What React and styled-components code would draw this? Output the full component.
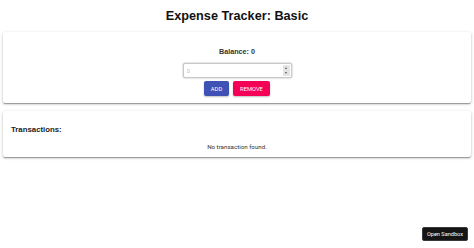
import React, { useState } from "react";
import styled, { createGlobalStyle } from "styled-components";

const GlobalStyle = createGlobalStyle`
  body {
    margin: 0;
    background: #fff;
    font-family: Roboto, "Liberation Sans", Arial, sans-serif;
    color: #222;
  }
`;

const Page = styled.div`
  padding: 0 3px 4px;
`;

const Title = styled.h1`
  margin: 0;
  height: 32px;
  display: flex;
  align-items: center;
  justify-content: center;
  font-family: "Liberation Sans", Arial, sans-serif;
  font-size: 12.7px;
  font-weight: 700;
  color: #111;
`;

const Card = styled.div`
  background: #fff;
  border-radius: 2px;
  box-shadow: 0 1px 3px 0 rgba(0, 0, 0, 0.25), 0 1px 1px 0 rgba(0, 0, 0, 0.18),
    0 2px 1px -1px rgba(0, 0, 0, 0.14);
  margin-bottom: ${props => props.gap || 0}px;
`;

const BalanceCard = styled(Card)`
  display: flex;
  flex-direction: column;
  align-items: center;
  padding: 15px 0 7px;
`;

const Balance = styled.div`
  font-family: "Liberation Sans", Arial, sans-serif;
  font-size: 7.2px;
  font-weight: 700;
  line-height: 9px;
  color: #333;
  margin-bottom: 7px;
`;

const Field = styled.div`
  box-sizing: border-box;
  width: 109px;
  height: 15px;
  display: flex;
  align-items: stretch;
  border: 1px solid #c8c8c8;
  border-radius: 2px;
  box-shadow: 0 0 2px rgba(0, 0, 0, 0.35);
  background: #fff;
  margin-bottom: 3px;
`;

const Input = styled.input`
  flex: 1;
  min-width: 0;
  border: 0;
  padding: 0 3px;
  font-family: Roboto, sans-serif;
  font-size: 6px;
  outline: 0;
  background: transparent;
  &::placeholder {
    color: #bbb;
  }
`;

const Spinner = styled.div`
  width: 7px;
  margin: 1px;
  background: #e4e4e4;
  border-radius: 1px;
  display: flex;
  flex-direction: column;
  align-items: center;
  justify-content: space-around;
`;

const Arrow = styled.span`
  width: 0;
  height: 0;
  border-left: 1.5px solid transparent;
  border-right: 1.5px solid transparent;
  ${props =>
    props.down
      ? "border-top: 2px solid #555;"
      : "border-bottom: 2px solid #555;"}
`;

const Buttons = styled.div`
  display: flex;
  gap: 4px;
`;

const Button = styled.button`
  height: 15px;
  width: ${props => props.w}px;
  padding: 0;
  border: 0;
  border-radius: 2px;
  background: ${props => props.color};
  color: #fff;
  font-family: Roboto, sans-serif;
  font-size: 5.8px;
  font-weight: 400;
  box-shadow: 0 1px 2px rgba(0, 0, 0, 0.25);
  cursor: pointer;
`;

const ListCard = styled(Card)`
  padding: 14px 8px 6px;
`;

const ListTitle = styled.div`
  font-family: "Liberation Sans", Arial, sans-serif;
  font-size: 7.8px;
  font-weight: 700;
  line-height: 10px;
  color: #222;
  margin-bottom: 8px;
`;

const Empty = styled.div`
  text-align: center;
  font-size: 6.2px;
  line-height: 8px;
  color: #333;
`;

const SandboxButton = styled.a`
  position: fixed;
  right: 6px;
  bottom: 7px;
  box-sizing: border-box;
  height: 14px;
  padding: 0 4px;
  display: flex;
  align-items: center;
  background: #151515;
  border: 1px solid #3a3a3a;
  border-radius: 2px;
  color: #fff;
  font-family: Roboto, sans-serif;
  font-size: 5.6px;
  text-decoration: none;
`;

export default function App() {
  const [balance] = useState(0);
  const [transactions] = useState([]);

  return (
    <Page>
      <GlobalStyle />
      <Title>Expense Tracker: Basic</Title>
      <BalanceCard gap={8}>
        <Balance>Balance: {balance}</Balance>
        <Field>
          <Input type="text" placeholder="0" />
          <Spinner>
            <Arrow />
            <Arrow down />
          </Spinner>
        </Field>
        <Buttons>
          <Button w={25} color="#3f51b5">
            ADD
          </Button>
          <Button w={37} color="#f50057">
            REMOVE
          </Button>
        </Buttons>
      </BalanceCard>
      <ListCard>
        <ListTitle>Transactions:</ListTitle>
        {transactions.length === 0 && <Empty>No transaction found.</Empty>}
      </ListCard>
      <SandboxButton href="#">Open Sandbox</SandboxButton>
    </Page>
  );
}
